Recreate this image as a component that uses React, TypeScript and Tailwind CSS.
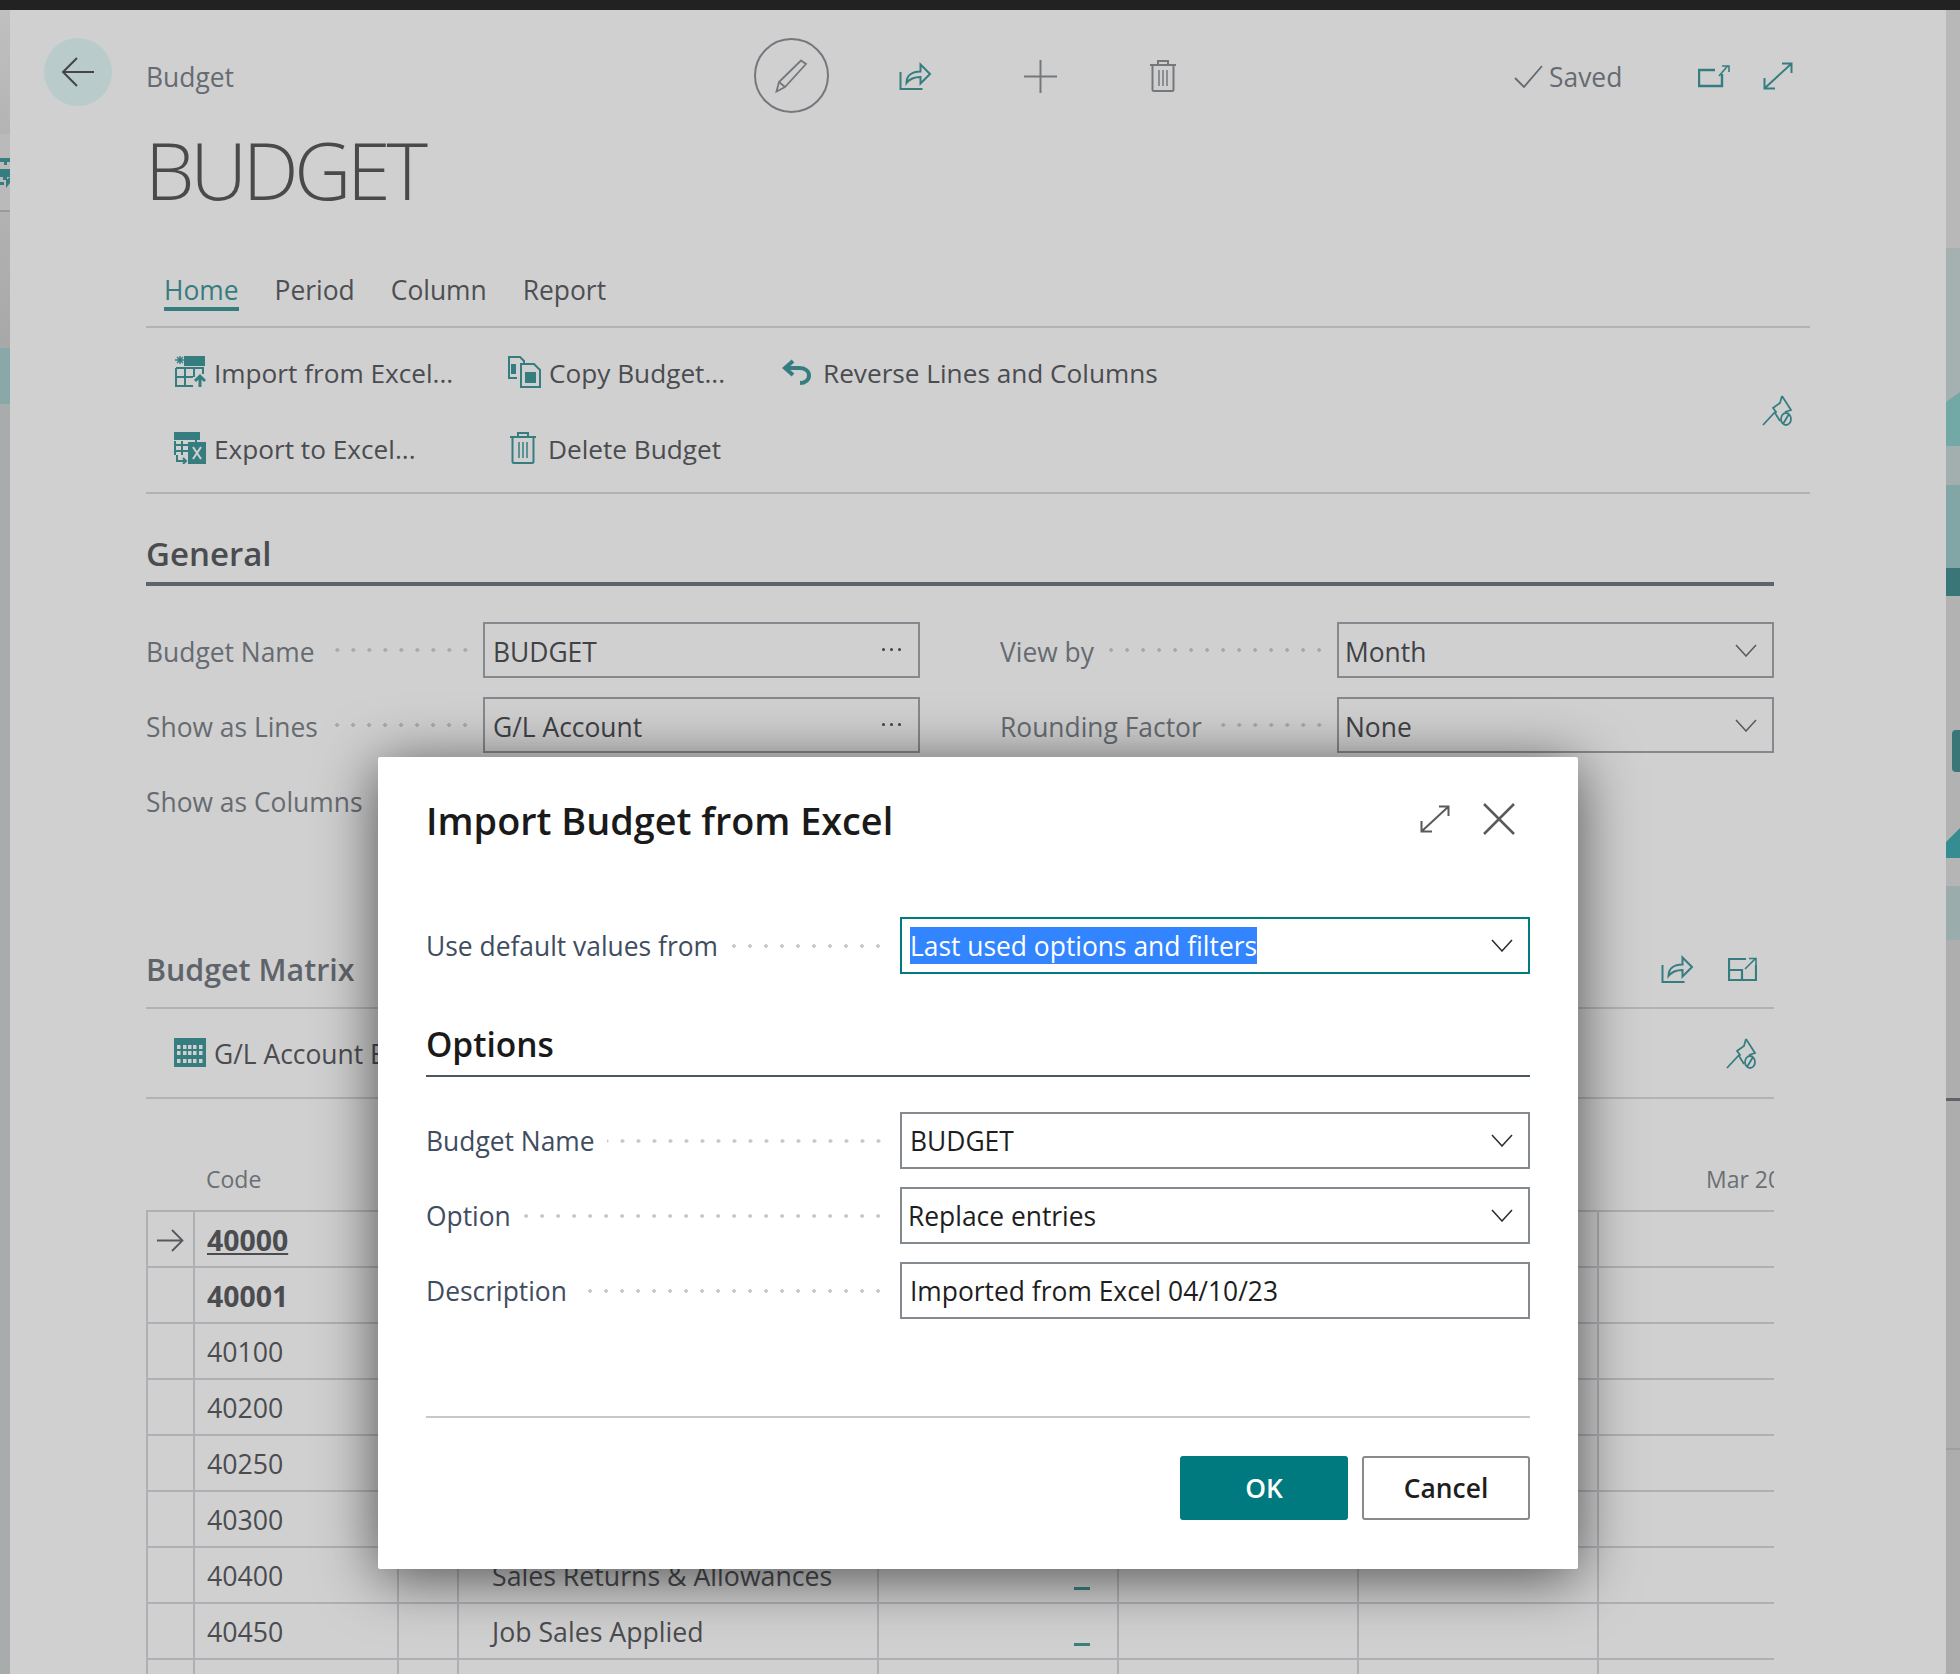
import React from 'react';

const TEAL = '#367d80';

const Pencil = () => (
  <svg width="33" height="34" viewBox="0 0 33 34" fill="none" stroke="#74787d" strokeWidth="1.8">
    <path d="M26 1.500l5 3.500L10 28 1.500 32.500 4 23z" />
    <path d="M4 23l6 5" />
  </svg>
);

const ShareIcon = () => (
  <svg width="33" height="28" viewBox="0 0 33 28" fill="none" stroke={TEAL} strokeWidth="2">
    <path d="M1.5 10v17h22" />
    <path d="M7.5 21c0-8 6-11.500 14-11.500V2.500L31 12l-9.500 9.500V15c-6 0-10.500 1.500-14 6z" />
  </svg>
);

const TrashIcon = ({ color, w = 26, h = 32 }: { color: string; w?: number; h?: number }) => (
  <svg width={w} height={h} viewBox="0 0 26 32" fill="none" stroke={color} strokeWidth="2">
    <path d="M0 5h26M8 5V1h10v4" />
    <path d="M2.500 5v24.500q0 1.500 1.500 1.500h18q1.500 0 1.500-1.500V5" />
    <path d="M9 10v16M13 10v16M17 10v16" strokeWidth="1.500" />
  </svg>
);

const ExternalIcon = () => (
  <svg width="32" height="24" viewBox="0 0 32 24" fill="none" stroke={TEAL} strokeWidth="2.400">
    <path d="M24 10v12H1V6h16" />
    <path d="M21 12L30 1.500M24 2h7v6" strokeWidth="1.600" />
  </svg>
);

const ExpandIcon = ({ color, w = 30, h = 28 }: { color: string; w?: number; h?: number }) => (
  <svg width={w} height={h} viewBox="0 0 30 28" fill="none" stroke={color} strokeWidth="2">
    <path d="M2 26L28 2M19 1.500h9.500V11M1.500 16v10.500H12" />
  </svg>
);

const PinIcon = () => (
  <svg width="31" height="31" viewBox="0 0 31 31" fill="none" stroke={TEAL} strokeWidth="1.800">
    <path d="M1 30l12-13" />
    <path d="M20 1l9 14-6 2M20 1l-2 7-7 5 3 4-1 1 5 8" />
    <ellipse cx="24" cy="24" rx="5" ry="6" />
    <path d="M21 29l6-10" />
  </svg>
);

const ImportIcon = () => (
  <svg width="32" height="32" viewBox="0 0 32 32" fill="none" stroke={TEAL} strokeWidth="2">
    <path d="M11 1h19v8H11z" fill={TEAL} />
    <path d="M3 1l6 6M9 1L3 7M1 4h10M6 0v8" strokeWidth="1.400" />
    <path d="M2 12h27v6M2 12v18h17M11 12v18M2 21h17M20 12v9" />
    <path d="M26 31V21M21 25l5-5 5 5" strokeWidth="3" />
  </svg>
);

const ExportIcon = () => (
  <svg width="32" height="32" viewBox="0 0 32 32" fill="none" stroke={TEAL} strokeWidth="2">
    <path d="M0 0h26v8H0z" fill={TEAL} stroke="none" />
    <path d="M1 9v14M1 13h13M1 19h13M8 9v14M22 8v2" />
    <path d="M14 10h18v22H14z" fill={TEAL} stroke="none" />
    <path d="M19 15l8 12M27 15l-8 12" stroke="#d0d0d0" />
    <path d="M3 23v6h9M9 26l3 3-3 3" />
  </svg>
);

const CopyIcon = () => (
  <svg width="33" height="32" viewBox="0 0 33 32" fill="none" stroke={TEAL} strokeWidth="2">
    <path d="M9 22H1V1h11l4 4v3" />
    <path d="M7 9h-3v8h3z" fill={TEAL} />
    <path d="M13 8h13l6 6v17H13z" />
    <path d="M18 17h9v9h-9z" fill={TEAL} />
  </svg>
);

const ReverseIcon = () => (
  <svg width="30" height="27" viewBox="0 0 30 27" fill="none" stroke={TEAL} strokeWidth="4">
    <path d="M3 9h14c6 0 10 3 10 7.500S23 24 18 24" />
    <path d="M11 2L3 9l8 7" />
  </svg>
);

const GridIcon = () => (
  <svg width="32" height="29" viewBox="0 0 32 29">
    <rect width="32" height="29" fill={TEAL} />
    {[7, 13, 21].map(y =>
      [3, 9, 14, 19, 25].map(x => <rect key={`${x}-${y}`} x={x} y={y} width="3.500" height="4" fill="#d0d0d0" />),
    )}
  </svg>
);

const Chevron = ({ color }: { color: string }) => (
  <svg width="22" height="13" viewBox="0 0 22 13" fill="none" stroke={color} strokeWidth="1.500">
    <path d="M1 1l10 11L21 1" />
  </svg>
);

const Dots = ({ light }: { light?: boolean }) => (
  <div
    className={`flex-1 h-[4px] ml-[12px] mr-[10px] bg-repeat-x bg-right bg-[length:16px_4px] ${
      light
        ? 'bg-[radial-gradient(circle,#c9c9c9_1.700px,transparent_2px)]'
        : 'bg-[radial-gradient(circle,#a9a9a9_1.700px,transparent_2px)]'
    }`}
  />
);

const PageField = ({ label, value, kind }: { label: string; value: string; kind: 'more' | 'select' }) => (
  <div className="flex items-center h-[56px]">
    <span className="pt-[5px] text-[26.4px] text-[#666b72] whitespace-nowrap">{label}</span>
    <Dots />
    <div
      className={`w-[437px] h-[56px] shrink-0 border-2 border-[#85888d] flex items-center justify-between pr-[15px] text-[26.4px] text-[#404246] ${
        kind === 'select' ? 'pl-[6px]' : 'pl-[8px]'
      }`}
    >
      <span className="pt-[5px]">{value}</span>
      {kind === 'more' ? (
        <span className="flex gap-[5px] mr-[2px] mb-[2px]">
          <i className="w-[3px] h-[3px] bg-[#404246] rounded-full" />
          <i className="w-[3px] h-[3px] bg-[#404246] rounded-full" />
          <i className="w-[3px] h-[3px] bg-[#404246] rounded-full" />
        </span>
      ) : (
        <Chevron color="#55585c" />
      )}
    </div>
  </div>
);

const DialogField = ({ label, value, select, pl }: { label: string; value: string; select?: boolean; pl?: string }) => (
  <div className="flex items-center h-[57px]">
    <span className="pt-[3px] text-[26.4px] text-[#3f4d5e] whitespace-nowrap">{label}</span>
    <Dots light />
    <div
      className={`w-[630px] h-[57px] ml-[4px] shrink-0 border-2 border-[#858a91] flex items-center justify-between pr-[15px] text-[26.4px] text-[#1e1e1e] ${
        pl ?? 'pl-[8px]'
      }`}
    >
      <span className="pt-[3px]">{value}</span>
      {select && <Chevron color="#2b2b2b" />}
    </div>
  </div>
);

const rows = [
  { code: '40000', bold: true, link: true, current: true },
  { code: '40001', bold: true },
  { code: '40100' },
  { code: '40200' },
  { code: '40250' },
  { code: '40300' },
  { code: '40400', name: 'Sales Returns & Allowances', dash: true },
  { code: '40450', name: 'Job Sales Applied', dash: true },
  { code: '' },
];

const cell = 'h-[56px] shrink-0 border-r-2 border-[#aeb0b4]';

export default function App() {
  return (
    <div className="relative w-[1960px] h-[1674px] overflow-hidden bg-[#d0d0d0] font-['Open_Sans','Liberation_Sans',sans-serif] flex flex-col">
      <div className="h-[10px] bg-[#222222] shrink-0" />
      <div className="flex flex-1 min-h-0">
        {/* page behind, left edge */}
        <div className="w-[10px] shrink-0 flex flex-col overflow-hidden">
          <div className="h-[124px] bg-gradient-to-b from-[#c0c0c0] to-[#b4b4b4]" />
          <div className="h-[76px] bg-[#bababa] pt-[24px]">
            <svg width="10" height="30" viewBox="0 0 10 30" fill={TEAL}>
              <path d="M0 0h10v4H7v3H4V4H0zM0 11h10v8H7v3H3v-3H0zM0 24h4v3H0zM6 22l4-3v6l-4 5z" />
            </svg>
          </div>
          <div className="h-[2px] bg-[#9a9a9a]" />
          <div className="h-[136px] bg-gradient-to-b from-[#b2b2b2] to-[#a8a8a8]" />
          <div className="h-[56px] bg-[#8aa8a8]" />
          <div className="flex-1 bg-[#a9acac]" />
        </div>

        <div className="flex-1 min-w-0 pl-[136px]">
          {/* header */}
          <div className="flex items-center h-[76px] mt-[28px] -ml-[136px] text-[#666b72]">
            <div className="w-[744px] shrink-0 flex items-center pl-[34px]">
              <div className="w-[68px] h-[68px] rounded-full bg-[#b9cbcb] flex items-center justify-center -mt-[8px]">
                <svg width="34" height="30" viewBox="0 0 34 30" fill="none" stroke="#454545" strokeWidth="2">
                  <path d="M33 15H2M16 1L2 15l14 14" />
                </svg>
              </div>
              <span className="ml-[34px] pt-[3px] text-[26.4px]">Budget</span>
            </div>
            <div className="w-[75px] h-[75px] shrink-0 -mt-[1px] rounded-full border-2 border-[#74787d] flex items-center justify-center">
              <Pencil />
            </div>
            <div className="ml-[70px] shrink-0">
              <ShareIcon />
            </div>
            <div className="ml-[92px] shrink-0">
              <svg className="block" width="33" height="33" viewBox="0 0 33 33" stroke="#74787d" strokeWidth="2">
                <path d="M0 16.500h33M16.500 0v33" />
              </svg>
            </div>
            <div className="ml-[93px] shrink-0">
              <TrashIcon color="#74787d" />
            </div>
            <div className="ml-[338px] shrink-0">
              <svg className="block" width="29" height="23" viewBox="0 0 29 23" fill="none" stroke="#666b72" strokeWidth="1.800">
                <path d="M1 13l9 9L28 1" />
              </svg>
            </div>
            <span className="ml-[6px] pt-[3px] w-[149px] shrink-0 text-[26.4px]">Saved</span>
            <div className="shrink-0">
              <ExternalIcon />
            </div>
            <div className="ml-[33px] shrink-0">
              <ExpandIcon color={TEAL} />
            </div>
          </div>

          <h1 className="mt-[16px] -ml-[1px] h-[80px] leading-[80px] text-[79px] font-light text-[#4a4a4a] tracking-[-4.3px]">BUDGET</h1>

          {/* tabs */}
          <div className="mt-[60px] w-[1664px] flex pl-[18px] gap-[36px] text-[26.4px] text-[#4d4f53]">
            <span className="h-[41px] leading-[40px] border-b-4 border-[#367d80] text-[#367d80]">Home</span>
            <span className="h-[41px] leading-[40px]">Period</span>
            <span className="h-[41px] leading-[40px]">Column</span>
            <span className="h-[41px] leading-[40px]">Report</span>
          </div>
          <div className="mt-[15px] h-[2px] w-[1664px] bg-[#b0b3b8]" />

          {/* actions */}
          <div className="w-[1664px] h-[164px] flex items-center justify-between pl-[28px] pr-[17px] text-[26.2px] text-[#4a4c50]">
            <div className="grid grid-cols-[334px_274px_auto] grid-rows-[76px_76px]">
              <div className="flex items-center gap-[8px]">
                <ImportIcon />
                <span className="pt-[4px]">Import from Excel...</span>
              </div>
              <div className="flex items-center gap-[8px]">
                <CopyIcon />
                <span className="pt-[4px]">Copy Budget...</span>
              </div>
              <div className="flex items-center gap-[11px]">
                <ReverseIcon />
                <span className="pt-[4px]">Reverse Lines and Columns</span>
              </div>
              <div className="flex items-center gap-[8px]">
                <ExportIcon />
                <span className="pt-[4px]">Export to Excel...</span>
              </div>
              <div className="flex items-center gap-[12px] pl-[2px]">
                <TrashIcon color={TEAL} />
                <span className="pt-[4px]">Delete Budget</span>
              </div>
            </div>
            <PinIcon />
          </div>
          <div className="h-[2px] w-[1664px] bg-[#b0b3b8]" />

          {/* general */}
          <div className="w-[1628px]">
            <h2 className="mt-[40px] h-[40px] leading-[40px] text-[33px] font-semibold text-[#4a4c50]">General</h2>
            <div className="mt-[8px] h-[4px] bg-[#5f646b]" />
            <div className="mt-[36px] grid grid-cols-2 gap-x-[80px] gap-y-[19px]">
              <PageField label="Budget Name" value="BUDGET" kind="more" />
              <PageField label="View by" value="Month" kind="select" />
              <PageField label="Show as Lines" value="G/L Account" kind="more" />
              <PageField label="Rounding Factor" value="None" kind="select" />
              <span className="h-[56px] leading-[60px] text-[26.4px] text-[#666b72]">Show as Columns</span>
            </div>

            <div className="mt-[122px] h-[40px] flex items-center justify-between pr-[17px]">
              <h2 className="text-[30.4px] font-semibold text-[#5f646b]">Budget Matrix</h2>
              <div className="flex items-center gap-[34px] mb-[2px]">
                <ShareIcon />
                <svg width="29" height="24" viewBox="0 0 29 24" fill="none" stroke={TEAL} strokeWidth="2.200">
                  <path d="M28 8v15H1V2h17M1 13h13v10" />
                  <path d="M17 12L27 2M21 1.500h7v7" strokeWidth="1.600" />
                </svg>
              </div>
            </div>
            <div className="mt-[17px] h-[2px] bg-[#b0b3b8]" />
            <div className="h-[88px] flex items-center justify-between pl-[28px] pr-[17px]">
              <div className="flex items-center gap-[8px] text-[26.4px] text-[#4a4c50]">
                <GridIcon />
                <span className="pt-[3px]">G/L Account Balance/Budget</span>
              </div>
              <PinIcon />
            </div>
            <div className="h-[2px] bg-[#b0b3b8]" />

            {/* matrix */}
            <div className="h-[111px] flex items-end pb-[14px] text-[23px] text-[#6a6f75]">
              <span className="pl-[60px] w-[1560px] shrink-0">Code</span>
              <span className="w-[68px] overflow-hidden whitespace-nowrap">Mar 2023</span>
            </div>
            <div className="border-t-2 border-[#aeb0b4]">
              {rows.map(r => (
                <div key={r.code} className="flex border-b-2 border-[#aeb0b4] h-[56px] text-[26.7px] text-[#4a4c50]">
                  <div className={`${cell} w-[49px] border-l-2 flex items-center justify-center`}>
                    {r.current && (
                      <svg width="27" height="23" viewBox="0 0 27 23" fill="none" stroke="#55585c" strokeWidth="1.800">
                        <path d="M0 11.500h25M15 1l10.500 10.500L15 22" />
                      </svg>
                    )}
                  </div>
                  <div className={`${cell} w-[204px] pl-[12px] leading-[56px] ${r.bold ? 'font-bold text-[28.4px]' : ''} ${r.link ? 'underline' : ''}`}>
                    {r.code}
                  </div>
                  <div className={`${cell} w-[60px]`} />
                  <div className={`${cell} w-[420px] pl-[33px] leading-[56px] whitespace-nowrap text-[26.7px]`}>{r.name}</div>
                  <div className={`${cell} w-[240px] flex items-end justify-end pr-[27px] pb-[14px]`}>
                    {r.dash && <i className="w-[16px] h-[3px] bg-[#3a8080]" />}
                  </div>
                  <div className={`${cell} w-[240px]`} />
                  <div className={`${cell} w-[240px]`} />
                  <div className="w-[175px]" />
                </div>
              ))}
            </div>
          </div>
        </div>

        {/* page behind, right edge */}
        <div className="w-[14px] shrink-0 flex flex-col overflow-hidden">
          <div className="h-[238px] bg-[#b8b8b8]" />
          <div className="h-[144px] bg-[#a5b1b1]" />
          <div className="h-[54px] bg-[#a5b1b1]">
            <div className="h-full bg-[#72a8a6] [clip-path:polygon(0_10px,100%_0,100%_100%,0_100%)]" />
          </div>
          <div className="h-[39px] bg-[#a3afaf]" />
          <div className="h-[83px] bg-[#82a6a6]" />
          <div className="h-[28px] bg-[#3a7578]" />
          <div className="h-[134px] bg-[#b2b2b2]" />
          <div className="h-[42px] bg-[#b2b2b2] pl-[6px]">
            <div className="h-full bg-[#3a7578] rounded-l-[4px]" />
          </div>
          <div className="h-[56px] bg-[#b2b2b2]" />
          <div className="h-[30px] bg-[#b2b2b2]">
            <div className="h-full bg-[#358d92] [clip-path:polygon(0_14px,100%_0,100%_100%,0_100%)]" />
          </div>
          <div className="h-[28px] bg-[#b5b5b5]" />
          <div className="h-[54px] bg-[#9aacac]" />
          <div className="h-[158px] bg-[#aeaeae]" />
          <div className="h-[3px] bg-[#606268]" />
          <div className="h-[347px] bg-[#adadad]" />
          <div className="h-[2px] bg-[#9f9f9f]" />
          <div className="flex-1 bg-[#adadad]" />
        </div>
      </div>

      {/* dialog */}
      <div className="absolute left-[378px] top-[757px] w-[1200px] h-[812px] rounded-[2px] bg-white shadow-[0_8px_60px_rgba(0,0,0,0.62)] px-[48px] flex flex-col">
        <div className="mt-[39px] h-[50px] flex items-center justify-between">
          <h2 className="text-[37.8px] font-semibold text-[#1a1a1a]">Import Budget from Excel</h2>
          <div className="flex items-center gap-[33px] pr-[15px] mb-[5px]">
            <ExpandIcon color="#5a5a5a" />
            <svg width="32" height="32" viewBox="0 0 32 32" stroke="#5a5a5a" strokeWidth="2.500">
              <path d="M1 1l30 30M31 1L1 31" />
            </svg>
          </div>
        </div>
        <div className="mt-[71px] flex items-center h-[57px]">
          <span className="pt-[3px] text-[26.4px] text-[#3f4d5e] whitespace-nowrap">Use default values from</span>
          <Dots light />
          <div className="w-[630px] h-[57px] ml-[4px] shrink-0 border-2 border-[#007b80] flex items-center justify-between pl-[8px] pr-[15px] text-[26.4px]">
            <span className="bg-[#3285ff] text-white h-[37px] leading-[39px] whitespace-nowrap overflow-hidden">Last used options and filters</span>
            <Chevron color="#2b2b2b" />
          </div>
        </div>
        <h3 className="mt-[48px] h-[44px] leading-[44px] text-[33.5px] font-semibold text-[#1a1a1a]">Options</h3>
        <div className="h-[2px] mt-[9px] bg-[#4d5760]" />
        <div className="mt-[35px] flex flex-col gap-[18px]">
          <DialogField label="Budget Name" value="BUDGET" select />
          <DialogField label="Option" value="Replace entries" select pl="pl-[6px]" />
          <DialogField label="Description" value="Imported from Excel 04/10/23" />
        </div>
        <div className="mt-[97px] h-[2px] bg-[#c8c8c8]" />
        <div className="mt-[38px] flex justify-end gap-[14px]">
          <button className="w-[168px] h-[64px] pt-[2px] rounded-[3px] bg-[#007a7e] text-white text-[26.4px] font-semibold">OK</button>
          <button className="w-[168px] h-[64px] pt-[2px] rounded-[3px] border-2 border-[#8a8a8a] bg-white text-[#1e1e1e] text-[26.4px] font-semibold">Cancel</button>
        </div>
      </div>
    </div>
  );
}
